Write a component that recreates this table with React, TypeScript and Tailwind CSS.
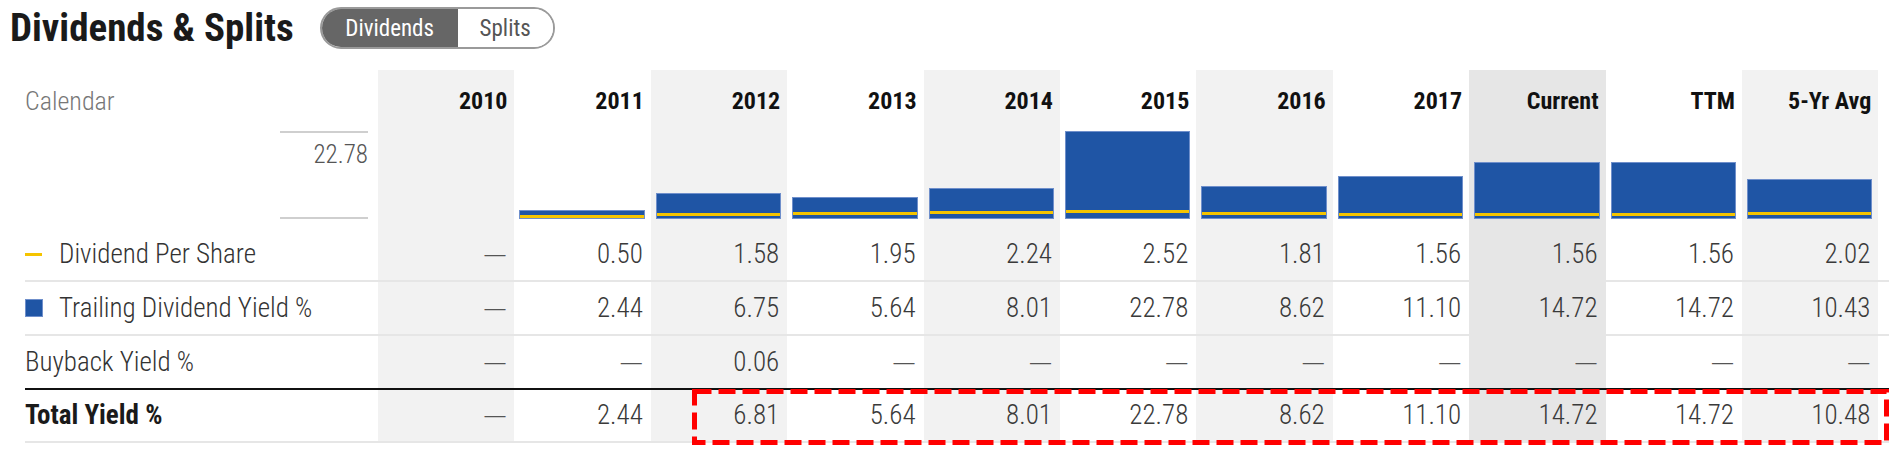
import React from "react";

type Col = {
  h: string;
  bg: string;
  dps: string;
  tdy: string;
  bb: string;
  tot: string;
  y?: number;
  d?: number;
};

const cols: Col[] = [
  { h: "2010", bg: "bg-[#f2f2f2]", dps: "—", tdy: "—", bb: "—", tot: "—" },
  { h: "2011", bg: "bg-white", dps: "0.50", tdy: "2.44", bb: "—", tot: "2.44", y: 2.44, d: 0.5 },
  { h: "2012", bg: "bg-[#f2f2f2]", dps: "1.58", tdy: "6.75", bb: "0.06", tot: "6.81", y: 6.75, d: 1.58 },
  { h: "2013", bg: "bg-white", dps: "1.95", tdy: "5.64", bb: "—", tot: "5.64", y: 5.64, d: 1.95 },
  { h: "2014", bg: "bg-[#f2f2f2]", dps: "2.24", tdy: "8.01", bb: "—", tot: "8.01", y: 8.01, d: 2.24 },
  { h: "2015", bg: "bg-white", dps: "2.52", tdy: "22.78", bb: "—", tot: "22.78", y: 22.78, d: 2.52 },
  { h: "2016", bg: "bg-[#f2f2f2]", dps: "1.81", tdy: "8.62", bb: "—", tot: "8.62", y: 8.62, d: 1.81 },
  { h: "2017", bg: "bg-white", dps: "1.56", tdy: "11.10", bb: "—", tot: "11.10", y: 11.1, d: 1.56 },
  { h: "Current", bg: "bg-[#e6e6e6]", dps: "1.56", tdy: "14.72", bb: "—", tot: "14.72", y: 14.72, d: 1.56 },
  { h: "TTM", bg: "bg-white", dps: "1.56", tdy: "14.72", bb: "—", tot: "14.72", y: 14.72, d: 1.56 },
  { h: "5-Yr Avg", bg: "bg-[#f2f2f2]", dps: "2.02", tdy: "10.43", bb: "—", tot: "10.48", y: 10.43, d: 2.02 },
];

const SCALE = 88 / 22.78;

function Cells({ k }: { k: "dps" | "tdy" | "bb" | "tot" }) {
  return (
    <>
      {cols.map((c) => (
        <div
          key={c.h}
          className={`${c.bg} w-[136.4px] shrink-0 flex items-center justify-end pr-[8px] text-[27px] font-light text-[#3a3a3a] leading-none`}
        >
          {c[k] === "—" ? (
            <span className="[font-family:'Liberation_Sans',sans-serif] text-[21px] font-normal text-[#555555] leading-none mr-[1px] -translate-y-[1px]">
              —
            </span>
          ) : (
            c[k]
          )}
        </div>
      ))}
      <div className="w-[11px] shrink-0" />
    </>
  );
}

export default function App() {
  return (
    <div className="relative w-[1895px] h-[461px] bg-white overflow-hidden [font-family:'Roboto_Condensed','Liberation_Sans_Narrow','Noto_Sans',sans-serif] [font-stretch:condensed]">
      {/* Title bar */}
      <div className="flex items-center h-[42px] mt-[7px] pl-[10px] gap-[26px]">
        <div className="text-[39px] font-bold text-[#1a1a1a] leading-none">Dividends &amp; Splits</div>
        <div className="flex h-[42px] w-[235px] rounded-full border-2 border-[#9a9a9a] overflow-hidden">
          <div className="w-[136px] bg-[#666666] flex items-center justify-center text-white text-[23px] font-normal leading-none">
            Dividends
          </div>
          <div className="flex-1 bg-white flex items-center justify-center text-[#555555] text-[23px] font-normal leading-none">
            Splits
          </div>
        </div>
      </div>

      {/* Table */}
      <div className="mt-[21px] ml-[25px] w-[1864px]">
        {/* header row */}
        <div className="flex h-[61px]">
          <div className="w-[353px] shrink-0 flex items-center text-[26px] font-light text-[#777777] leading-none">
            Calendar
          </div>
          {cols.map((c) => (
            <div
              key={c.h}
              className={`${c.bg} w-[136.4px] shrink-0 flex items-center justify-end pr-[7px] text-[24px] font-bold text-[#111111] leading-none`}
            >
              {c.h}
            </div>
          ))}
          <div className="w-[11px] shrink-0" />
        </div>

        {/* chart row */}
        <div className="flex h-[97px]">
          <div className="w-[353px] shrink-0 flex items-start justify-end pr-[10px]">
            <div className="w-[88px] h-[88px] border-t-2 border-b-2 border-[#cfcfcf] flex justify-end pt-[9px]">
              <span className="text-[25px] font-light text-[#555555] leading-none">22.78</span>
            </div>
          </div>
          {cols.map((c) => (
            <div key={c.h} className={`${c.bg} w-[136.4px] shrink-0 flex items-end pl-[5px] pr-[6px] pb-[9px]`}>
              {c.y !== undefined && c.d !== undefined && (
                <div
                  className="relative w-full bg-[#1f55a5] border border-[#6f8fcb]"
                  style={{ height: `${c.y * SCALE}px` }}
                >
                  <div
                    className="absolute left-0 right-0 h-[3px] bg-[#f5c400]"
                    style={{ bottom: `${Math.max(0, c.d * 3.2 - 3)}px` }}
                  />
                </div>
              )}
            </div>
          ))}
          <div className="w-[11px] shrink-0" />
        </div>

        {/* Dividend per share */}
        <div className="flex h-[54px] border-b-2 border-[#e6e6e6]">
          <div className="w-[353px] shrink-0 flex items-center gap-[17px] text-[27px] font-light text-[#333333] leading-none">
            <span className="w-[17px] h-[3px] bg-[#f5c400]" />
            <span>Dividend Per Share</span>
          </div>
          <Cells k="dps" />
        </div>

        {/* Trailing */}
        <div className="flex h-[54px] border-b-2 border-[#e6e6e6]">
          <div className="w-[353px] shrink-0 flex items-center gap-[16px] text-[27px] font-light text-[#333333] leading-none">
            <span className="w-[18px] h-[18px] bg-[#1f55a5] border border-[#6f8fcb]" />
            <span>Trailing Dividend Yield %</span>
          </div>
          <Cells k="tdy" />
        </div>

        {/* Buyback */}
        <div className="flex h-[54px] border-b-2 border-[#111111]">
          <div className="w-[353px] shrink-0 flex items-center text-[27px] font-light text-[#333333] leading-none">
            Buyback Yield %
          </div>
          <Cells k="bb" />
        </div>

        {/* Total */}
        <div className="flex h-[53px] border-b-2 border-[#e6e6e6]">
          <div className="w-[353px] shrink-0 flex items-center text-[27px] font-bold text-[#1a1a1a] leading-none">
            Total Yield %
          </div>
          <Cells k="tot" />
        </div>
      </div>

      {/* red dashed annotation */}
      <svg className="absolute left-[692px] top-[389px]" width="1197" height="56" viewBox="0 0 1197 56">
        <rect
          x="2.5"
          y="2.5"
          width="1192"
          height="51"
          fill="none"
          stroke="#ff0000"
          strokeWidth="5"
          strokeDasharray="17 7"
        />
      </svg>
    </div>
  );
}
